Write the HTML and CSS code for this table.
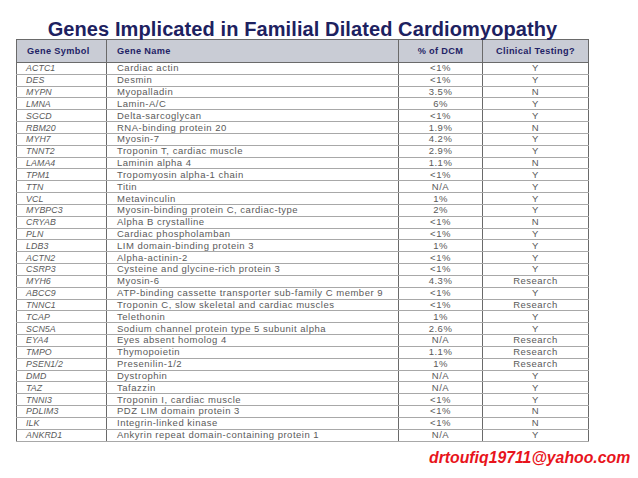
FILE: index.html
```html
<!DOCTYPE html>
<html>
<head>
<meta charset="utf-8">
<link rel="stylesheet" href="styles.css">
</head>
<body>
<div class="slide">
  <h1 class="title">Genes Implicated in Familial Dilated Cardiomyopathy</h1>
  <table class="genes">
    <colgroup>
      <col class="c-sym"><col class="c-name"><col class="c-pct"><col class="c-test">
    </colgroup>
    <thead>
      <tr><th class="l">Gene Symbol</th><th class="l">Gene Name</th><th>% of DCM</th><th>Clinical Testing?</th></tr>
    </thead>
    <tbody>
      <tr><td class="sym">ACTC1</td><td>Cardiac actin</td><td class="c">&lt;1%</td><td class="c">Y</td></tr>
      <tr><td class="sym">DES</td><td>Desmin</td><td class="c">&lt;1%</td><td class="c">Y</td></tr>
      <tr><td class="sym">MYPN</td><td>Myopalladin</td><td class="c">3.5%</td><td class="c">N</td></tr>
      <tr><td class="sym">LMNA</td><td>Lamin-A/C</td><td class="c">6%</td><td class="c">Y</td></tr>
      <tr><td class="sym">SGCD</td><td>Delta-sarcoglycan</td><td class="c">&lt;1%</td><td class="c">Y</td></tr>
      <tr><td class="sym">RBM20</td><td>RNA-binding protein 20</td><td class="c">1.9%</td><td class="c">N</td></tr>
      <tr><td class="sym">MYH7</td><td>Myosin-7</td><td class="c">4.2%</td><td class="c">Y</td></tr>
      <tr><td class="sym">TNNT2</td><td>Troponin T, cardiac muscle</td><td class="c">2.9%</td><td class="c">Y</td></tr>
      <tr><td class="sym">LAMA4</td><td>Laminin alpha 4</td><td class="c">1.1%</td><td class="c">N</td></tr>
      <tr><td class="sym">TPM1</td><td>Tropomyosin alpha-1 chain</td><td class="c">&lt;1%</td><td class="c">Y</td></tr>
      <tr><td class="sym">TTN</td><td>Titin</td><td class="c">N/A</td><td class="c">Y</td></tr>
      <tr><td class="sym">VCL</td><td>Metavinculin</td><td class="c">1%</td><td class="c">Y</td></tr>
      <tr><td class="sym">MYBPC3</td><td>Myosin-binding protein C, cardiac-type</td><td class="c">2%</td><td class="c">Y</td></tr>
      <tr><td class="sym">CRYAB</td><td>Alpha B crystalline</td><td class="c">&lt;1%</td><td class="c">N</td></tr>
      <tr><td class="sym">PLN</td><td>Cardiac phospholamban</td><td class="c">&lt;1%</td><td class="c">Y</td></tr>
      <tr><td class="sym">LDB3</td><td>LIM domain-binding protein 3</td><td class="c">1%</td><td class="c">Y</td></tr>
      <tr><td class="sym">ACTN2</td><td>Alpha-actinin-2</td><td class="c">&lt;1%</td><td class="c">Y</td></tr>
      <tr><td class="sym">CSRP3</td><td>Cysteine and glycine-rich protein 3</td><td class="c">&lt;1%</td><td class="c">Y</td></tr>
      <tr><td class="sym">MYH6</td><td>Myosin-6</td><td class="c">4.3%</td><td class="c">Research</td></tr>
      <tr><td class="sym">ABCC9</td><td>ATP-binding cassette transporter sub-family C member 9</td><td class="c">&lt;1%</td><td class="c">Y</td></tr>
      <tr><td class="sym">TNNC1</td><td>Troponin C, slow skeletal and cardiac muscles</td><td class="c">&lt;1%</td><td class="c">Research</td></tr>
      <tr><td class="sym">TCAP</td><td>Telethonin</td><td class="c">1%</td><td class="c">Y</td></tr>
      <tr><td class="sym">SCN5A</td><td>Sodium channel protein type 5 subunit alpha</td><td class="c">2.6%</td><td class="c">Y</td></tr>
      <tr><td class="sym">EYA4</td><td>Eyes absent homolog 4</td><td class="c">N/A</td><td class="c">Research</td></tr>
      <tr><td class="sym">TMPO</td><td>Thymopoietin</td><td class="c">1.1%</td><td class="c">Research</td></tr>
      <tr><td class="sym">PSEN1/2</td><td>Presenilin-1/2</td><td class="c">1%</td><td class="c">Research</td></tr>
      <tr><td class="sym">DMD</td><td>Dystrophin</td><td class="c">N/A</td><td class="c">Y</td></tr>
      <tr><td class="sym">TAZ</td><td>Tafazzin</td><td class="c">N/A</td><td class="c">Y</td></tr>
      <tr><td class="sym">TNNI3</td><td>Troponin I, cardiac muscle</td><td class="c">&lt;1%</td><td class="c">Y</td></tr>
      <tr><td class="sym">PDLIM3</td><td>PDZ LIM domain protein 3</td><td class="c">&lt;1%</td><td class="c">N</td></tr>
      <tr><td class="sym">ILK</td><td>Integrin-linked kinase</td><td class="c">&lt;1%</td><td class="c">N</td></tr>
      <tr><td class="sym">ANKRD1</td><td>Ankyrin repeat domain-containing protein 1</td><td class="c">N/A</td><td class="c">Y</td></tr>
    </tbody>
  </table>
  <div class="email">drtoufiq19711@yahoo.com</div>
</div>
</body>
</html>
```
FILE: styles.css
```css
html, body {
  margin: 0;
  padding: 0;
  background: #ffffff;
}
.slide {
  width: 638px;
  height: 478px;
  position: relative;
  font-family: "Liberation Sans", Arial, sans-serif;
}
.title {
  margin: 0;
  padding: 20px 0 0 0;
  height: 19px;
  line-height: 19px;
  font-size: 20px;
  font-weight: bold;
  color: #1d2160;
  text-align: center;
  width: 605px;
  letter-spacing: 0.1px;
}
.genes {
  margin: 0 0 0 16px;
  width: 572px;
  border-collapse: collapse;
  table-layout: fixed;
  border: 1.5px solid #6a6a6a;
}
.c-sym { width: 90px; }
.c-name { width: 292px; }
.c-pct { width: 84px; }
.c-test { width: 106px; }
.genes th {
  height: 22px;
  padding: 0;
  background: #c9ccd5;
  color: #1f2366;
  font-size: 9.2px;
  font-weight: bold;
  letter-spacing: 0.35px;
  text-align: center;
  border: 1px solid #6a6a6a;
  border-bottom: 1.5px solid #6a6a6a;
  white-space: nowrap;
}
.genes th.l {
  text-align: left;
  padding-left: 10px;
}
.genes td {
  height: 10.83px;
  padding: 0 0 0 10px;
  font-size: 9.5px;
  line-height: 10px;
  color: #5a5a5a;
  border-top: 1px solid #a8a8a8;
  border-bottom: 1px solid #a8a8a8;
  border-left: 1.5px solid #6a6a6a;
  border-right: 1.5px solid #6a6a6a;
  white-space: nowrap;
  overflow: hidden;
  letter-spacing: 0.5px;
}
.genes td.sym {
  font-style: italic;
  font-size: 8.8px;
  letter-spacing: 0.1px;
  padding-left: 9px;
}
.genes td.c {
  text-align: center;
  padding: 0;
}
.email {
  position: absolute;
  left: 429px;
  top: 449px;
  font-size: 15.8px;
  font-weight: bold;
  font-style: italic;
  color: #e8141c;
  white-space: nowrap;
}
```
